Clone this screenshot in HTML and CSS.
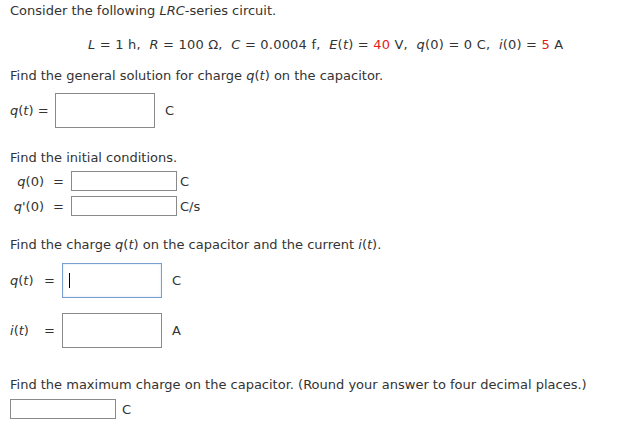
FILE: index.html
```html
<!DOCTYPE html>
<html>
<head>
<meta charset="utf-8">
<link rel="stylesheet" href="styles.css">
</head>
<body>
<div class="page">
  <p class="intro">Consider the following <i>LRC</i>-series circuit.</p>
  <p class="given"><i>L</i> = 1 h,&nbsp; <i>R</i> = 100 Ω,&nbsp; <i>C</i> = 0.0004 f,&nbsp; <i>E</i>(<i>t</i>) = <span class="red">40</span> V,&nbsp; <i>q</i>(0) = 0 C,&nbsp; <i>i</i>(0) = <span class="red">5</span> A</p>

  <p class="q q1">Find the general solution for charge <i>q</i>(<i>t</i>) on the capacitor.</p>
  <div class="row r1">
    <span class="lbl l1"><i>q</i>(<i>t</i>) =</span>
    <span class="box big"></span>
    <span class="unit">C</span>
  </div>

  <p class="q q2">Find the initial conditions.</p>
  <div class="grid-ic">
    <span class="lbl"><i>q</i>(0)</span><span class="eq">=</span><span class="box small"></span><span class="unit">C</span>
    <span class="lbl"><i>q</i>'(0)</span><span class="eq">=</span><span class="box small"></span><span class="unit">C/s</span>
  </div>

  <p class="q q3">Find the charge <i>q</i>(<i>t</i>) on the capacitor and the current <i>i</i>(<i>t</i>).</p>
  <div class="grid-ch">
    <span class="lbl"><i>q</i>(<i>t</i>)</span><span class="eq">=</span><span class="box big focus"><span class="caret"></span></span><span class="unit">C</span>
    <span class="lbl"><i>i</i>(<i>t</i>)</span><span class="eq">=</span><span class="box big"></span><span class="unit">A</span>
  </div>

  <p class="q q4">Find the maximum charge on the capacitor. (Round your answer to four decimal places.)</p>
  <div class="row r4">
    <span class="box small"></span><span class="unit">C</span>
  </div>
</div>
</body>
</html>
```
FILE: styles.css
```css
html, body {
  margin: 0;
  padding: 0;
  background: #fff;
}
body {
  font-family: "DejaVu Sans", Verdana, sans-serif;
  font-size: 13px;
  color: #333;
}
.page {
  padding: 3px 10px 0 10px;
}
p {
  margin: 0;
  line-height: 16px;
}
.red { color: #e31a1a; }
.given {
  margin-top: 18px;
  padding-left: 78px;
  letter-spacing: 0.2px;
}
.q1 { margin-top: 15px; }
.row {
  display: flex;
  align-items: center;
}
.r1 { margin-top: 9px; }
.l1 { width: 45px; }
.box {
  display: block;
  box-sizing: border-box;
  border: 1px solid #8a8a8a;
  background: #fff;
}
.big { width: 100px; height: 35px; }
.small { width: 106px; height: 20px; }
.unit { padding-left: 10px; }
.q2 { margin-top: 22px; }
.grid-ic {
  margin-top: 5px;
  display: grid;
  grid-template-columns: 34px 27px 106px auto;
  justify-content: start;
  row-gap: 5px;
  align-items: center;
}
.grid-ic .lbl { text-align: right; }
.grid-ic .eq { text-align: center; padding-left: 2px; }
.grid-ic .unit { padding-left: 3px; }
.q3 { margin-top: 21px; }
.grid-ch {
  margin-top: 10px;
  display: grid;
  grid-template-columns: 30px 22px 100px auto;
  justify-content: start;
  row-gap: 15px;
  align-items: center;
}
.grid-ch .eq { padding-left: 4px; }
.grid-ch .unit { padding-left: 10px; }
.focus {
  border-color: #7a9fcf;
  box-shadow: inset 0 0 2px #c5d8ee;
  display: flex;
  align-items: center;
  padding-left: 6px;
}
.caret {
  display: block;
  width: 1px;
  height: 15px;
  background: #000;
}
.q4 {
  margin-top: 29px;
  white-space: nowrap;
}
.r4 { margin-top: 6px; }
.r4 .unit { padding-left: 6px; }
```
